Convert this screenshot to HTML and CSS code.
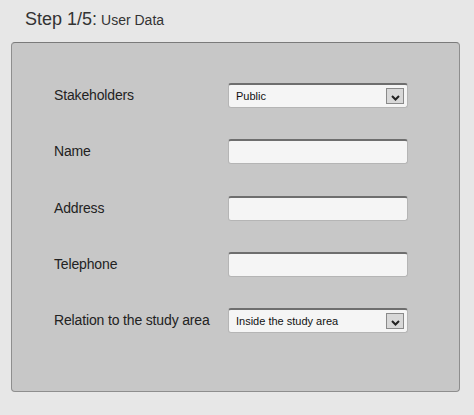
FILE: index.html
```html
<!DOCTYPE html>
<html>
<head>
<meta charset="utf-8">
<link rel="stylesheet" href="styles.css">
</head>
<body>
<div class="page">
  <h1 class="title"><span class="step">Step 1/5:</span><span class="sub">User Data</span></h1>
  <div class="panel">
    <div class="form">
      <label class="label">Stakeholders</label>
      <div class="select"><span class="value">Public</span><span class="arrow"><svg width="9" height="6" viewBox="0 0 9 6"><path d="M1 1 L4.5 4.5 L8 1" fill="none" stroke="#222" stroke-width="2"/></svg></span></div>

      <label class="label">Name</label>
      <div class="input"></div>

      <label class="label">Address</label>
      <div class="input"></div>

      <label class="label">Telephone</label>
      <div class="input"></div>

      <label class="label">Relation to the study area</label>
      <div class="select"><span class="value">Inside the study area</span><span class="arrow"><svg width="9" height="6" viewBox="0 0 9 6"><path d="M1 1 L4.5 4.5 L8 1" fill="none" stroke="#222" stroke-width="2"/></svg></span></div>
    </div>
  </div>
</div>
</body>
</html>
```
FILE: styles.css
```css
html, body {
  margin: 0;
  padding: 0;
  background: #e7e7e7;
}
.page {
  width: 474px;
  height: 415px;
  font-family: "Liberation Sans", Arial, sans-serif;
  color: #2e2e2e;
  box-sizing: border-box;
  padding-top: 3px;
}
.title {
  margin: 0 0 0 25px;
  font-weight: normal;
  line-height: 22px;
  height: 39px;
}
.step {
  font-size: 18px;
  color: #333;
}
.sub {
  font-size: 14px;
  color: #333;
  margin-left: 4px;
}
.panel {
  margin-left: 11px;
  width: 449px;
  height: 350px;
  box-sizing: border-box;
  background: #c7c7c7;
  border: 1px solid #8e8e8e;
  border-top-color: #7a7a7a;
  border-radius: 4px;
  padding: 40px 0 0 42px;
}
.form {
  display: grid;
  grid-template-columns: 174px 180px;
  grid-auto-rows: 25px;
  row-gap: 31.3px;
  align-items: center;
}
.label {
  font-size: 14px;
  letter-spacing: -0.15px;
  color: #222;
  line-height: 25px;
}
.input, .select {
  height: 25px;
  box-sizing: border-box;
  background: #f5f5f5;
  border: 1px solid #b5b5b5;
  border-top: 2px solid #6e6e6e;
  border-radius: 3px;
}
.select {
  display: flex;
  align-items: center;
  justify-content: space-between;
  padding: 0 3px 0 7px;
}
.value {
  font-size: 11px;
  color: #111;
}
.arrow {
  width: 18px;
  height: 16px;
  box-sizing: border-box;
  background: #d8d8d8;
  border: 1px solid #8a8a8a;
  display: flex;
  align-items: flex-end;
  justify-content: center;
  padding-bottom: 2px;
}
.arrow svg {
  display: block;
}
```
